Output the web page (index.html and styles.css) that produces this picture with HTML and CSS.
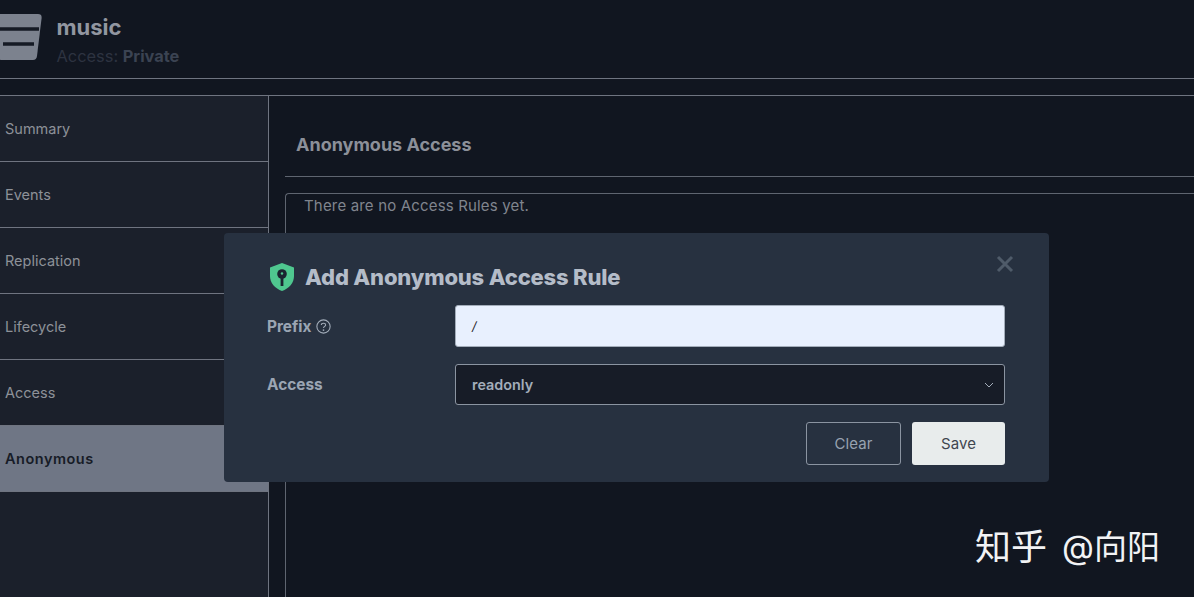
FILE: index.html
```html
<!DOCTYPE html>
<html lang="en">
<head>
  <meta charset="UTF-8">
  <title>music - Anonymous Access</title>
  <link rel="stylesheet" href="styles.css">
</head>
<body>
  <header class="bucket-head">
    <svg class="bucket-icon" width="42" height="48" viewBox="0 0 42 48">
      <path d="M-4 1H38Q42 1 41.600 5L37 43Q36.500 47 33 47H2Q-2 47-2.500 43Z" fill="#7c828e"/>
      <path d="M-4 16H39M3 31H34" stroke="#151a24" stroke-width="3.500" fill="none"/>
    </svg>
    <div class="bucket-info">
      <div class="bucket-name">music</div>
      <div class="bucket-access">Access: <b>Private</b></div>
    </div>
  </header>

  <div class="layout">
    <nav class="sidebar">
      <a class="nav-item">Summary</a>
      <a class="nav-item">Events</a>
      <a class="nav-item">Replication</a>
      <a class="nav-item">Lifecycle</a>
      <a class="nav-item">Access</a>
      <a class="nav-item active">Anonymous</a>
    </nav>
    <main class="content">
      <h2 class="content-title">Anonymous Access</h2>
      <div class="rules-box">There are no Access Rules yet.</div>
    </main>
  </div>

  <div class="modal">
    <svg class="modal-close" width="18" height="18" viewBox="0 0 18 18">
      <path d="M2 2L16 16M16 2L2 16" stroke="#4f5b69" stroke-width="3" fill="none"/>
    </svg>
    <h3 class="modal-title">
      <svg width="28" height="30" viewBox="0 0 28 30">
        <path d="M14 1L26 5.500V14C26 21 21 26.500 14 29C7 26.500 2 21 2 14V5.500Z" fill="#4fc78f"/>
        <circle cx="14" cy="12" r="4.800" fill="#1b2430"/>
        <path d="M14 14V24" stroke="#1b2430" stroke-width="2.800" fill="none"/>
        <circle cx="14" cy="11.500" r="1.200" fill="#4fc78f"/>
      </svg>
      Add Anonymous Access Rule
    </h3>
    <div class="form-row">
      <label class="form-label">Prefix
        <svg width="15" height="15" viewBox="0 0 14 14">
          <circle cx="7" cy="7" r="6.200" stroke="#a3adba" fill="none"/>
          <path d="M5 5.500C5 3.500 9 3.500 9 5.500C9 7 7 6.800 7 8.500" stroke="#a3adba" fill="none"/>
          <circle cx="7" cy="10.300" r=".8" fill="#a3adba"/>
        </svg>
      </label>
      <div class="text-input">/</div>
    </div>
    <div class="form-row">
      <label class="form-label">Access</label>
      <div class="select-input">
        readonly
        <svg width="10" height="6" viewBox="0 0 10 6">
          <path d="M1 1L5 5L9 1" stroke="#a3adba" fill="none"/>
        </svg>
      </div>
    </div>
    <div class="modal-actions">
      <button class="btn btn-clear">Clear</button>
      <button class="btn btn-save">Save</button>
    </div>
  </div>

  <div class="watermark"><span class="wm-logo">知乎</span><span class="wm-name">@向阳</span></div>
</body>
</html>
```

FILE: styles.css
```css
html, body {
  margin: 0;
  height: 597px;
  overflow: hidden;
}
body {
  background: #111620;
  font-family: Inter, "Noto Sans CJK SC", sans-serif;
  color: #8e939c;
  position: relative;
}
.bucket-head {
  height: 78px;
  border-bottom: 1px solid #6f7480;
  display: flex;
  align-items: flex-start;
  gap: 15px;
}
.bucket-icon {
  margin-top: 13px;
  flex: none;
}
.bucket-info {
  padding-top: 14px;
  margin-left: -0.5px;
}
.bucket-name {
  font-size: 22px;
  font-weight: 700;
  line-height: 27px;
  color: #9296a0;
}
.bucket-access {
  font-size: 16.400px;
  line-height: 20px;
  margin-top: 5px;
  color: #2d3340;
}
.bucket-access b {
  color: #3b4352;
}
.layout {
  margin-top: 16px;
  border-top: 1px solid #6f7480;
  display: flex;
  height: 501px;
}
.sidebar {
  width: 268px;
  flex: none;
  background: #1b202b;
  border-right: 1px solid #6f7480;
}
.nav-item {
  display: flex;
  align-items: center;
  height: 65px;
  padding-left: 5px;
  font-size: 14.500px;
  color: #8d9198;
  border-bottom: 1px solid #6f7480;
}
.nav-item.active {
  background: #6f7685;
  color: #171c27;
  font-weight: 600;
  letter-spacing: 0.500px;
}
.content {
  flex: 1;
  padding-left: 16px;
}
.content-title {
  margin: 0;
  height: 81px;
  box-sizing: border-box;
  padding: 37px 0 0 11px;
  font-size: 18px;
  line-height: 24px;
  font-weight: 700;
  color: #8c9099;
  border-bottom: 1px solid #5f6570;
}
.rules-box {
  margin-top: 16px;
  height: 420px;
  border: 1px solid #5f6570;
  border-right: 0;
  border-bottom: 0;
  border-top-left-radius: 4px;
  padding: 2px 0 0 18px;
  font-size: 15px;
  line-height: 19px;
  letter-spacing: 0.170px;
  color: #80858e;
}
.modal {
  position: absolute;
  left: 224px;
  top: 233px;
  width: 825px;
  height: 249px;
  box-sizing: border-box;
  padding: 29px 44px 0 43px;
  background: #273140;
  border-radius: 4px;
}
.modal-close {
  position: absolute;
  right: 35px;
  top: 22px;
}
.modal-title {
  margin: 0;
  display: flex;
  align-items: center;
  gap: 9px;
  height: 30px;
  margin-left: 1px;
  font-size: 22px;
  font-weight: 800;
  letter-spacing: -0.180px;
  color: #b4bcc8;
}
.form-row {
  display: flex;
  align-items: center;
  margin-top: 13px;
}
.form-row + .form-row {
  margin-top: 17px;
}
.form-label {
  width: 188px;
  flex: none;
  display: flex;
  align-items: center;
  gap: 5px;
  font-size: 15.400px;
  font-weight: 700;
  color: #9ba5b3;
}
.text-input, .select-input {
  flex: 1;
  height: 41px;
  box-sizing: border-box;
  display: flex;
  align-items: center;
  padding: 0 10px 0 16px;
  border-radius: 3px;
  font-size: 14.400px;
}
.text-input {
  background: #e8f0fe;
  border: 1px solid #a3adba;
  font-style: italic;
  font-size: 12.500px;
  color: #1d2026;
  height: 42px;
}
.select-input {
  justify-content: space-between;
  background: #171c27;
  border: 1px solid #8b94a1;
  font-weight: 600;
  color: #a3adba;
}
.modal-actions {
  display: flex;
  justify-content: flex-end;
  gap: 11px;
  margin-top: 17px;
}
.btn {
  height: 43px;
  box-sizing: border-box;
  border-radius: 3px;
  font-family: inherit;
  font-size: 15px;
  letter-spacing: 0.100px;
}
.btn-clear {
  width: 95px;
  background: transparent;
  border: 1px solid #8b94a1;
  color: #97a2b0;
}
.btn-save {
  width: 93px;
  background: #e8ecec;
  border: 0;
  color: #3f4650;
}
.watermark {
  position: absolute;
  left: 975px;
  top: 525px;
  display: flex;
  align-items: center;
  gap: 15px;
  line-height: 44px;
  color: #f2f3f5;
  white-space: nowrap;
}
.wm-logo {
  font-size: 36px;
}
.wm-name {
  font-size: 33px;
}
```
